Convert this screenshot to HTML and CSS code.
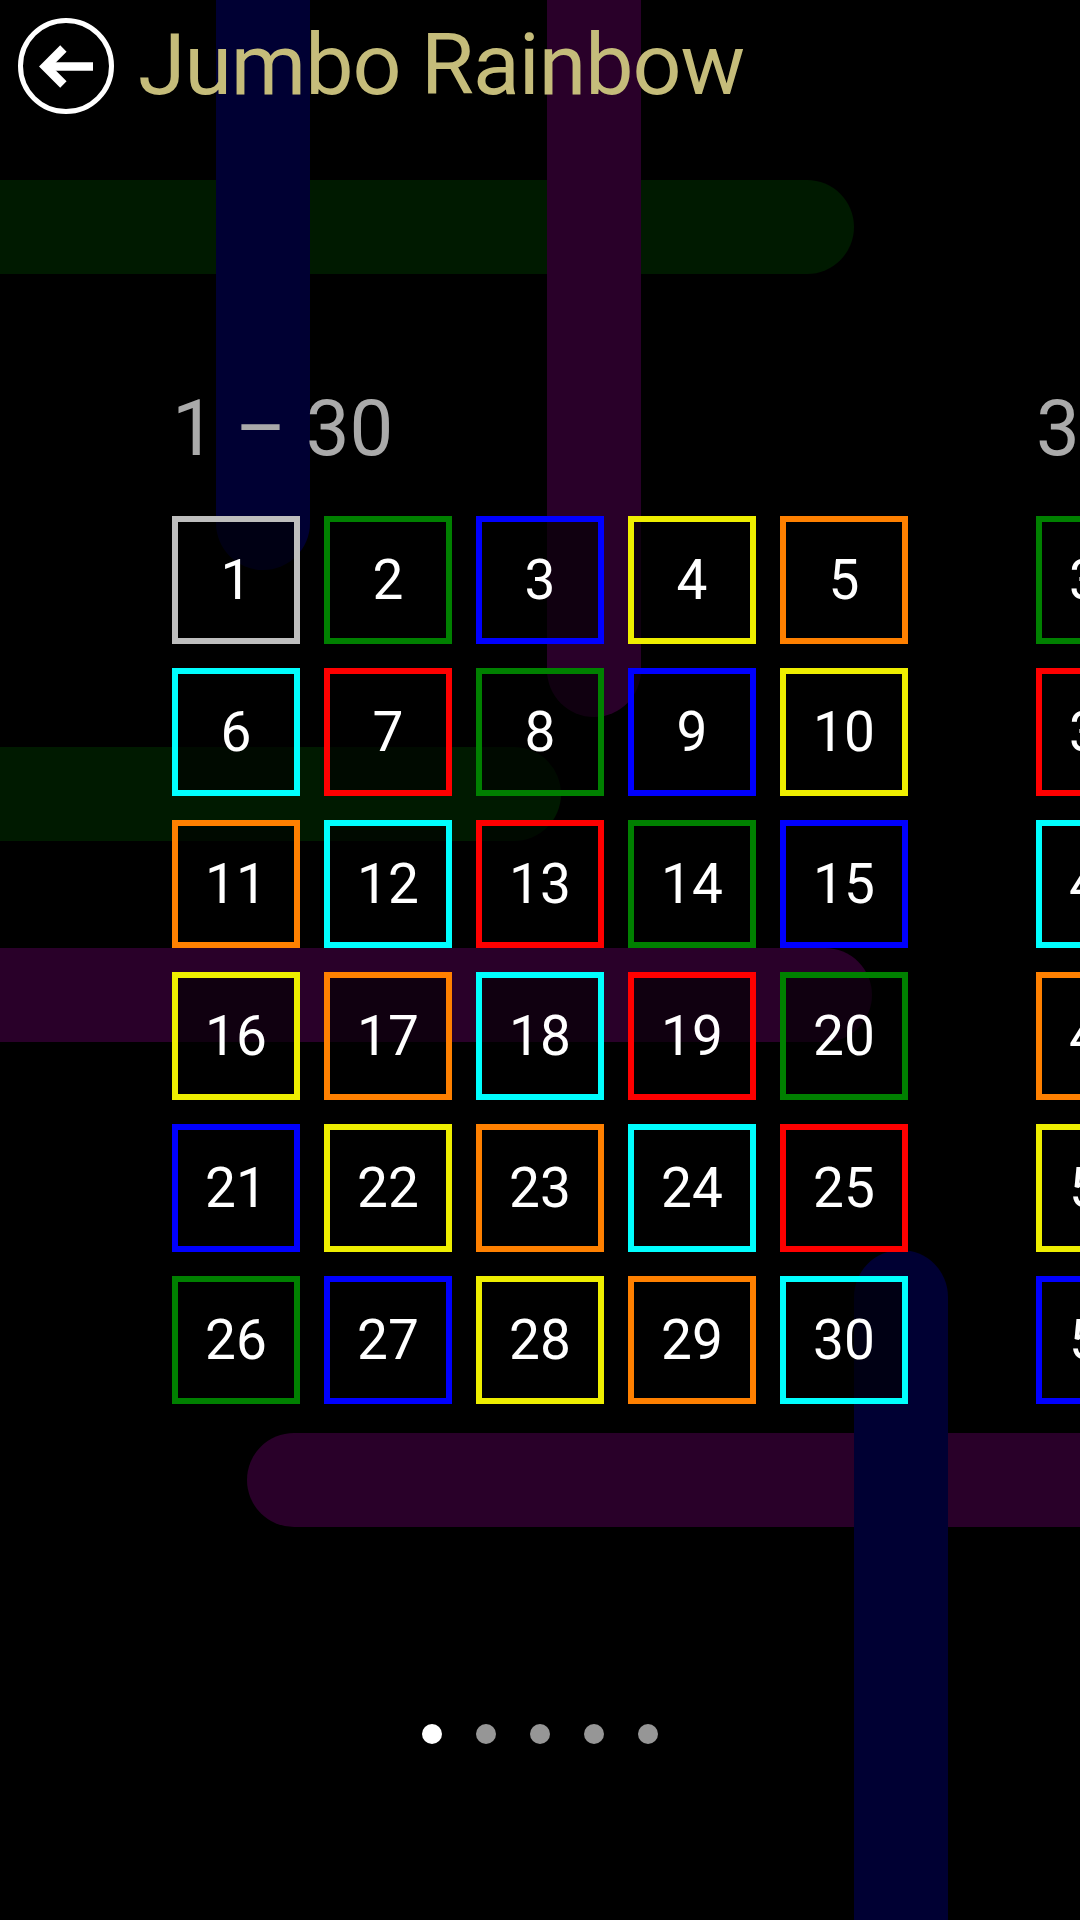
FILE: index.html
```html
<!DOCTYPE html>
<html>
<head>
<meta charset="utf-8">
<link rel="stylesheet" href="styles.css">
</head>
<body>
<div class="screen">
  <div class="bg">
    <div class="bar h green g1"></div>
    <div class="bar h green g2"></div>
    <div class="bar h purple p1"></div>
    <div class="bar h purple p2"></div>
    <div class="bar v blue b1"></div>
    <div class="bar v purple pv1"></div>
    <div class="bar v blue b2"></div>
  </div>

  <header class="header">
    <svg class="back" viewBox="0 0 96 96" width="96" height="96">
      <circle cx="48" cy="48" r="45.5" fill="none" stroke="#fff" stroke-width="5"/>
      <polyline points="45.4,30.5 27.4,48.5 45.4,66.5" fill="none" stroke="#fff" stroke-width="9" stroke-miterlimit="4"/>
      <line x1="28" y1="48.5" x2="75" y2="48.5" stroke="#fff" stroke-width="8.5"/>
    </svg>
    <h1 class="title">Jumbo Rainbow</h1>
  </header>

  <main class="pager">
    <section class="page">
      <h2 class="range">1 – 30</h2>
      <div class="grid">
        <div class="lvl silver">1</div>
        <div class="lvl green">2</div>
        <div class="lvl blue">3</div>
        <div class="lvl yellow">4</div>
        <div class="lvl orange">5</div>
        <div class="lvl cyan">6</div>
        <div class="lvl red">7</div>
        <div class="lvl green">8</div>
        <div class="lvl blue">9</div>
        <div class="lvl yellow">10</div>
        <div class="lvl orange">11</div>
        <div class="lvl cyan">12</div>
        <div class="lvl red">13</div>
        <div class="lvl green">14</div>
        <div class="lvl blue">15</div>
        <div class="lvl yellow">16</div>
        <div class="lvl orange">17</div>
        <div class="lvl cyan">18</div>
        <div class="lvl red">19</div>
        <div class="lvl green">20</div>
        <div class="lvl blue">21</div>
        <div class="lvl yellow">22</div>
        <div class="lvl orange">23</div>
        <div class="lvl cyan">24</div>
        <div class="lvl red">25</div>
        <div class="lvl green">26</div>
        <div class="lvl blue">27</div>
        <div class="lvl yellow">28</div>
        <div class="lvl orange">29</div>
        <div class="lvl cyan">30</div>
      </div>
    </section>
    <section class="page">
      <h2 class="range">31 – 60</h2>
      <div class="grid">
        <div class="lvl green">31</div>
        <div class="lvl blue">32</div>
        <div class="lvl yellow">33</div>
        <div class="lvl orange">34</div>
        <div class="lvl cyan">35</div>
        <div class="lvl red">36</div>
        <div class="lvl green">37</div>
        <div class="lvl blue">38</div>
        <div class="lvl yellow">39</div>
        <div class="lvl orange">40</div>
        <div class="lvl cyan">41</div>
        <div class="lvl red">42</div>
        <div class="lvl green">43</div>
        <div class="lvl blue">44</div>
        <div class="lvl yellow">45</div>
        <div class="lvl orange">46</div>
        <div class="lvl cyan">47</div>
        <div class="lvl red">48</div>
        <div class="lvl green">49</div>
        <div class="lvl blue">50</div>
        <div class="lvl yellow">51</div>
        <div class="lvl orange">52</div>
        <div class="lvl cyan">53</div>
        <div class="lvl red">54</div>
        <div class="lvl green">55</div>
        <div class="lvl blue">56</div>
        <div class="lvl yellow">57</div>
        <div class="lvl orange">58</div>
        <div class="lvl cyan">59</div>
        <div class="lvl red">60</div>
      </div>
    </section>
  </main>

  <nav class="dots">
    <span class="dot active"></span>
    <span class="dot"></span>
    <span class="dot"></span>
    <span class="dot"></span>
    <span class="dot"></span>
  </nav>
</div>
</body>
</html>
```

FILE: styles.css
```css
html, body {
  margin: 0;
  padding: 0;
  background: #000;
}

.screen {
  position: relative;
  width: 1080px;
  height: 1920px;
  overflow: hidden;
  background: #000;
  font-family: Roboto, "Noto Sans", sans-serif;
}

/* decorative background pipes */
.bg {
  position: absolute;
  inset: 0;
  z-index: 0;
}

.bar {
  position: absolute;
}

.bar.h { height: 94px; }
.bar.v { width: 94px; }

.bar.green { background: #001a00; }
.bar.purple { background: #290029; }
.bar.blue { background: #000033; }

.g1 { left: -100px; top: 180px; width: 954px; border-radius: 0 47px 47px 0; }
.g2 { left: -100px; top: 747px; width: 661px; border-radius: 0 47px 47px 0; }
.p1 { left: -100px; top: 948px; width: 972px; border-radius: 0 47px 47px 0; }
.p2 { left: 247px; top: 1433px; width: 900px; border-radius: 47px 0 0 47px; }

.b1 { left: 216px; top: -100px; height: 670px; border-radius: 0 0 47px 47px; }
.pv1 { left: 547px; top: -100px; height: 817px; border-radius: 0 0 47px 47px; }
.b2 { left: 854px; top: 1250px; height: 800px; border-radius: 47px 47px 0 0; }

/* header */
.header {
  position: relative;
  z-index: 1;
  display: flex;
  align-items: center;
  gap: 24px;
  padding: 18px;
}

.back {
  display: block;
  flex: none;
}

.title {
  margin: 0;
  font-weight: 400;
  font-size: 86px;
  line-height: 1;
  color: #c5bc7a;
  letter-spacing: -1px;
  position: relative;
  top: -1px;
}

/* pager */
.pager {
  position: relative;
  z-index: 1;
  display: flex;
  padding-left: 108px;
  margin-top: 258px;
}

.page {
  flex: none;
  width: 864px;
  display: flex;
  flex-direction: column;
  align-items: center;
}

.range {
  margin: 0 0 48px;
  width: 736px;
  font-weight: 400;
  font-size: 78px;
  line-height: 1;
  color: #aaaaaa;
}

.grid {
  display: grid;
  grid-template-columns: repeat(5, 128px);
  grid-auto-rows: 128px;
  gap: 24px;
}

.lvl {
  box-sizing: border-box;
  border: 6px solid;
  background: rgba(0, 0, 0, 0.6);
  color: #fff;
  font-size: 55px;
  line-height: 1;
  display: flex;
  align-items: center;
  justify-content: center;
}

.lvl.silver { border-color: #bebebe; }
.lvl.green { border-color: #008000; }
.lvl.blue { border-color: #0000ff; }
.lvl.yellow { border-color: #eeee00; }
.lvl.orange { border-color: #ff8000; }
.lvl.cyan { border-color: #00ffff; }
.lvl.red { border-color: #ff0000; }

/* page indicator */
.dots {
  position: relative;
  z-index: 1;
  display: flex;
  justify-content: center;
  gap: 34px;
  margin-top: 320px;
}

.dot {
  width: 20px;
  height: 20px;
  border-radius: 50%;
  background: #969696;
}

.dot.active {
  background: #ffffff;
}
```
